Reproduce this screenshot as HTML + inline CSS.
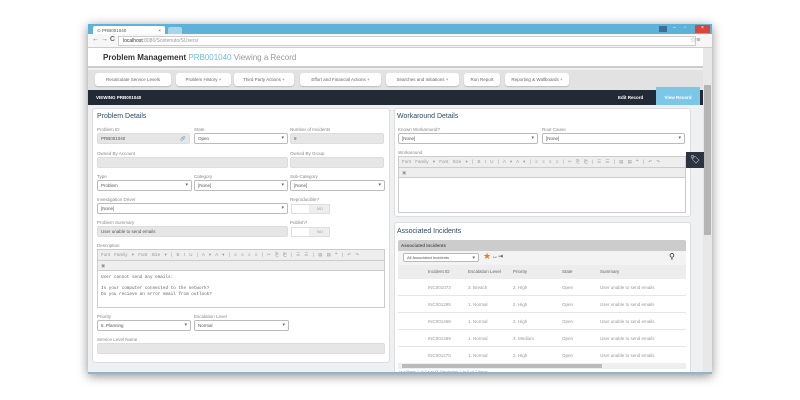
<!DOCTYPE html><html><head><style>
*{margin:0;padding:0;box-sizing:border-box}
body{width:800px;height:400px;background:#fff;font-family:"Liberation Sans",sans-serif;position:relative;overflow:hidden;color:#555}
.a{position:absolute}
.win{left:88px;top:24px;width:624px;height:350px;background:#eef0f1;box-shadow:0 2px 10px rgba(0,0,0,.45);overflow:hidden}
.lbl{position:absolute;font-size:4.5px;color:#888}
.in{position:absolute;height:11px;background:#e6e6e6;border:1px solid #ddd;border-radius:2px;font-size:4.5px;color:#555;padding:3px 3px;line-height:4px}
.sel{position:absolute;height:11px;background:#fff;border:1px solid #bbb;border-radius:2px;font-size:4.5px;color:#555;padding:3px 3px;line-height:4px}
.sel:after{content:"▾";position:absolute;right:3px;top:2px;font-size:5px;color:#666}
.pan{position:absolute;background:#fff;border:1px solid #ddd;border-radius:3px}
.h{position:absolute;font-size:7px;color:#2c4a6a}
.btn{position:absolute;top:73px;height:13px;background:#fff;border-radius:3px;font-size:4.5px;color:#666;line-height:13px;text-align:center;box-shadow:0 1px 1px #bbb}
.tb{position:absolute;height:11px;background:#eee;border:1px solid #ccc;border-bottom:none;font-size:4.5px;color:#999;word-spacing:3px;line-height:10px;padding-left:3px;overflow:hidden;white-space:nowrap}
.tog{position:absolute;width:39px;height:10px;background:#eee;border:1px solid #ddd;font-size:4px;color:#999;text-align:right;padding-right:6px;line-height:8px}
.tog:before{content:"";position:absolute;left:0;top:0;width:17px;height:8px;background:#fff}
.row{position:absolute;left:398px;width:288px;height:17px;background:#fff;border-bottom:1px solid #e6e6e6;font-size:4.5px;color:#999}
.row span,.ch span{position:absolute;top:6px}
</style></head><body>
<div class="a win"></div>
<div class="a" style="left:88px;top:24px;width:624px;height:10px;background:#5eb1d9"></div>
<div class="a" style="left:93px;top:26px;width:72px;height:8px;background:#fff;border-radius:2px 2px 0 0;font-size:4.5px;padding:2px 4px;color:#555">⊙ PRB001040<span style="float:right">×</span></div>
<div class="a" style="left:168px;top:27px;width:14px;height:7px;background:#a9d4ea;border-radius:2px 2px 0 0"></div>
<div class="a" style="left:659px;top:26px;width:8px;height:6px;background:#3b6f93"></div>
<div class="a" style="left:673px;top:25px;font-size:5px;color:#fff">–</div>
<div class="a" style="left:684px;top:25px;font-size:5px;color:#fff">▫</div>
<div class="a" style="left:695px;top:25px;width:15px;height:8px;background:#d9473c;color:#fff;font-size:5px;text-align:center">×</div>
<div class="a" style="left:88px;top:34px;width:624px;height:14px;background:#f6f6f6;border-bottom:1px solid #ccc"></div>
<div class="a" style="left:92px;top:36px;font-size:7px;color:#666">← → <b>C</b></div>
<div class="a" style="left:118px;top:36px;width:578px;height:10px;background:#fff;border:1px solid #ccc;font-size:5px;line-height:8px;padding-left:4px;color:#999"><span style="color:#333">localhost</span>:8080/Sostenuto/SUsers/</div>
<div class="a" style="left:690px;top:36px;font-size:7px;color:#888">☆≡</div>
<div class="a" style="left:88px;top:48px;width:615px;height:20px;background:#fff;border-bottom:2px solid #ccc"></div>
<div class="a" style="left:103px;top:53px;font-size:8px;font-weight:bold;color:#333">Problem Management <span style="color:#6cc0e5;font-weight:normal">PRB001040</span> <span style="color:#999;font-weight:normal">Viewing a Record</span></div>
<div class="a" style="left:88px;top:70px;width:615px;height:20px;background:#e2e2e2"></div>
<div class="btn" style="left:95px;width:76px">Recalculate Service Levels</div>
<div class="btn" style="left:176px;width:55px">Problem History +</div>
<div class="btn" style="left:234px;width:60px">Third Party Actions +</div>
<div class="btn" style="left:300px;width:81px">Effort and Financial Actions +</div>
<div class="btn" style="left:386px;width:73px">Searches and Initiations +</div>
<div class="btn" style="left:464px;width:36px">Run Report</div>
<div class="btn" style="left:505px;width:64px">Reporting &amp; Wallboards +</div>
<div class="a" style="left:88px;top:90px;width:615px;height:15px;background:#222a36"></div>
<div class="a" style="left:96px;top:95px;font-size:4.5px;color:#fff;font-weight:bold">VIEWING PRB001040</div>
<div class="a" style="left:618px;top:95px;font-size:4.5px;color:#fff;font-weight:bold">Edit Record</div>
<div class="a" style="left:656px;top:87px;width:44px;height:18px;background:#7cc7e8;font-size:4.5px;color:#fff;font-weight:bold;text-align:center;line-height:22px">View Record</div>
<div class="a" style="left:703px;top:48px;width:9px;height:326px;background:#e8e8e8"></div>
<div class="a" style="left:704px;top:85px;width:7px;height:150px;background:#b5b5b5"></div>

<div class="pan" style="left:92px;top:108px;width:298px;height:255px"></div>
<div class="h" style="left:97px;top:113px">Problem Details</div>
<div class="lbl" style="left:97px;top:127px">Problem ID</div><div class="in" style="left:97px;top:133px;width:93px">PRB001040<span style="float:right">🔗</span></div>
<div class="lbl" style="left:194px;top:127px">State</div><div class="sel" style="left:194px;top:133px;width:94px">Open</div>
<div class="lbl" style="left:290px;top:127px">Number of Incidents</div><div class="in" style="left:290px;top:133px;width:94px">8</div>
<div class="lbl" style="left:97px;top:151px">Owned By Account</div><div class="in" style="left:97px;top:157px;width:191px"></div>
<div class="lbl" style="left:290px;top:151px">Owned By Group</div><div class="in" style="left:290px;top:157px;width:94px"></div>
<div class="lbl" style="left:97px;top:174px">Type</div><div class="sel" style="left:97px;top:180px;width:95px">Problem</div>
<div class="lbl" style="left:194px;top:174px">Category</div><div class="sel" style="left:194px;top:180px;width:94px">[None]</div>
<div class="lbl" style="left:290px;top:174px">Sub-Category</div><div class="sel" style="left:290px;top:180px;width:95px">[None]</div>
<div class="lbl" style="left:97px;top:197px">Investigation Driver</div><div class="sel" style="left:97px;top:203px;width:191px">[None]</div>
<div class="lbl" style="left:290px;top:197px">Reproducible?</div><div class="tog" style="left:291px;top:204px">NO</div>
<div class="lbl" style="left:97px;top:220px">Problem Summary</div><div class="in" style="left:97px;top:226px;width:191px">User unable to send emails</div>
<div class="lbl" style="left:290px;top:220px">Publish?</div><div class="tog" style="left:291px;top:227px">NO</div>
<div class="lbl" style="left:97px;top:243px">Description</div>
<div class="tb" style="left:97px;top:249px;width:288px">Font Family ▾ Font Size ▾ | B I U | A ▾ A ▾ | ≡ ≡ ≡ ≡ | ✂ ⎘ ⎗ | ☰ ☰ | ▤ ▤ ❝ | ↶ ↷</div>
<div class="tb" style="left:97px;top:260px;width:288px;height:10px">▣</div>
<div class="a" style="left:97px;top:270px;width:288px;height:38px;background:#fff;border:1px solid #ccc;font-family:'Liberation Mono',monospace;font-size:4.3px;color:#666;padding:4px 3px;line-height:5.5px">User cannot send any emails:<br><br>Is your computer connected to the network?<br>Do you recieve an error email from outlook?</div>
<div class="lbl" style="left:97px;top:314px">Priority</div><div class="sel" style="left:97px;top:320px;width:94px">5. Planning</div>
<div class="lbl" style="left:194px;top:314px">Escalation Level</div><div class="sel" style="left:194px;top:320px;width:95px">Normal</div>
<div class="lbl" style="left:97px;top:337px">Service Level Name</div><div class="in" style="left:97px;top:343px;width:288px"></div>

<div class="pan" style="left:394px;top:108px;width:297px;height:109px"></div>
<div class="h" style="left:397px;top:113px">Workaround Details</div>
<div class="lbl" style="left:398px;top:127px">Known Workaround?</div><div class="sel" style="left:398px;top:133px;width:140px">[None]</div>
<div class="lbl" style="left:542px;top:127px">Root Cause</div><div class="sel" style="left:542px;top:133px;width:143px">[None]</div>
<div class="lbl" style="left:398px;top:150px">Workaround</div>
<div class="tb" style="left:398px;top:156px;width:288px">Font Family ▾ Font Size ▾ | B I U | A ▾ A ▾ | ≡ ≡ ≡ ≡ | ✂ ⎘ ⎗ | ☰ ☰ | ▤ ▤ ❝ | ↶ ↷</div>
<div class="tb" style="left:398px;top:167px;width:288px;height:10px">▣</div>
<div class="a" style="left:398px;top:177px;width:288px;height:36px;background:#fff;border:1px solid #ccc"></div>
<div class="a" style="left:686px;top:152px;width:18px;height:16px;background:#2b3441;color:#fff;font-size:8px;text-align:center;line-height:16px">🏷</div>

<div class="pan" style="left:394px;top:222px;width:297px;height:152px;border-bottom:none;border-radius:3px 3px 0 0"></div>
<div class="h" style="left:397px;top:228px">Associated Incidents</div>
<div class="a" style="left:398px;top:240px;width:288px;height:11px;background:#ccc;border-radius:2px 2px 0 0;font-size:4.5px;color:#555;padding:3px 3px;font-weight:bold">Associated Incidents</div>
<div class="a" style="left:398px;top:251px;width:288px;height:14px;background:#f3f3f3"></div>
<div class="sel" style="left:403px;top:253px;width:76px;height:9px;padding:2px 3px;font-size:4px">All Associated Incidents</div>
<div class="a" style="left:483px;top:251px;font-size:9px;color:#f07a1a">★</div>
<div class="a" style="left:492px;top:253px;font-size:6px;color:#333">↔⇥</div>
<div class="a" style="left:669px;top:252px;font-size:8px;color:#222">⚲</div>
<div class="ch a" style="left:398px;top:265px;width:288px;height:14px;background:#ededed;font-size:4.5px;color:#666"><span style="left:30px;top:4px">Incident ID</span><span style="left:70px;top:4px">Escalation Level</span><span style="left:115px;top:4px">Priority</span><span style="left:164px;top:4px">State</span><span style="left:202px;top:4px">Summary</span></div>
<div class="row" style="top:279px"><span style="left:30px">INC001073</span><span style="left:70px">3. Breach</span><span style="left:115px">2. High</span><span style="left:164px">Open</span><span style="left:202px">User unable to send emails</span></div>
<div class="row" style="top:296px"><span style="left:30px">INC001295</span><span style="left:70px">1. Normal</span><span style="left:115px">2. High</span><span style="left:164px">Open</span><span style="left:202px">User unable to send emails</span></div>
<div class="row" style="top:313px"><span style="left:30px">INC001468</span><span style="left:70px">1. Normal</span><span style="left:115px">2. High</span><span style="left:164px">Open</span><span style="left:202px">User unable to send emails</span></div>
<div class="row" style="top:330px"><span style="left:30px">INC001469</span><span style="left:70px">1. Normal</span><span style="left:115px">3. Medium</span><span style="left:164px">Open</span><span style="left:202px">User unable to send emails</span></div>
<div class="row" style="top:347px"><span style="left:30px">INC001470</span><span style="left:70px">1. Normal</span><span style="left:115px">2. High</span><span style="left:164px">Open</span><span style="left:202px">User unable to send emails</span></div>
<div class="a" style="left:398px;top:363px;width:288px;height:6px;background:#eee"></div>
<div class="a" style="left:402px;top:364px;width:200px;height:4px;background:#bbb"></div>
<div class="a" style="left:398px;top:369px;width:288px;height:3px;overflow:hidden;font-size:4px;color:#999;line-height:6px">&nbsp;|◂ ◂ Page 1 of 2 ▸ ▸| ⟳ Displaying 1 to 5 of 7 items</div>
<div class="a" style="left:88px;top:372px;width:624px;height:2px;background:#8fb4cf"></div>
</body></html>
